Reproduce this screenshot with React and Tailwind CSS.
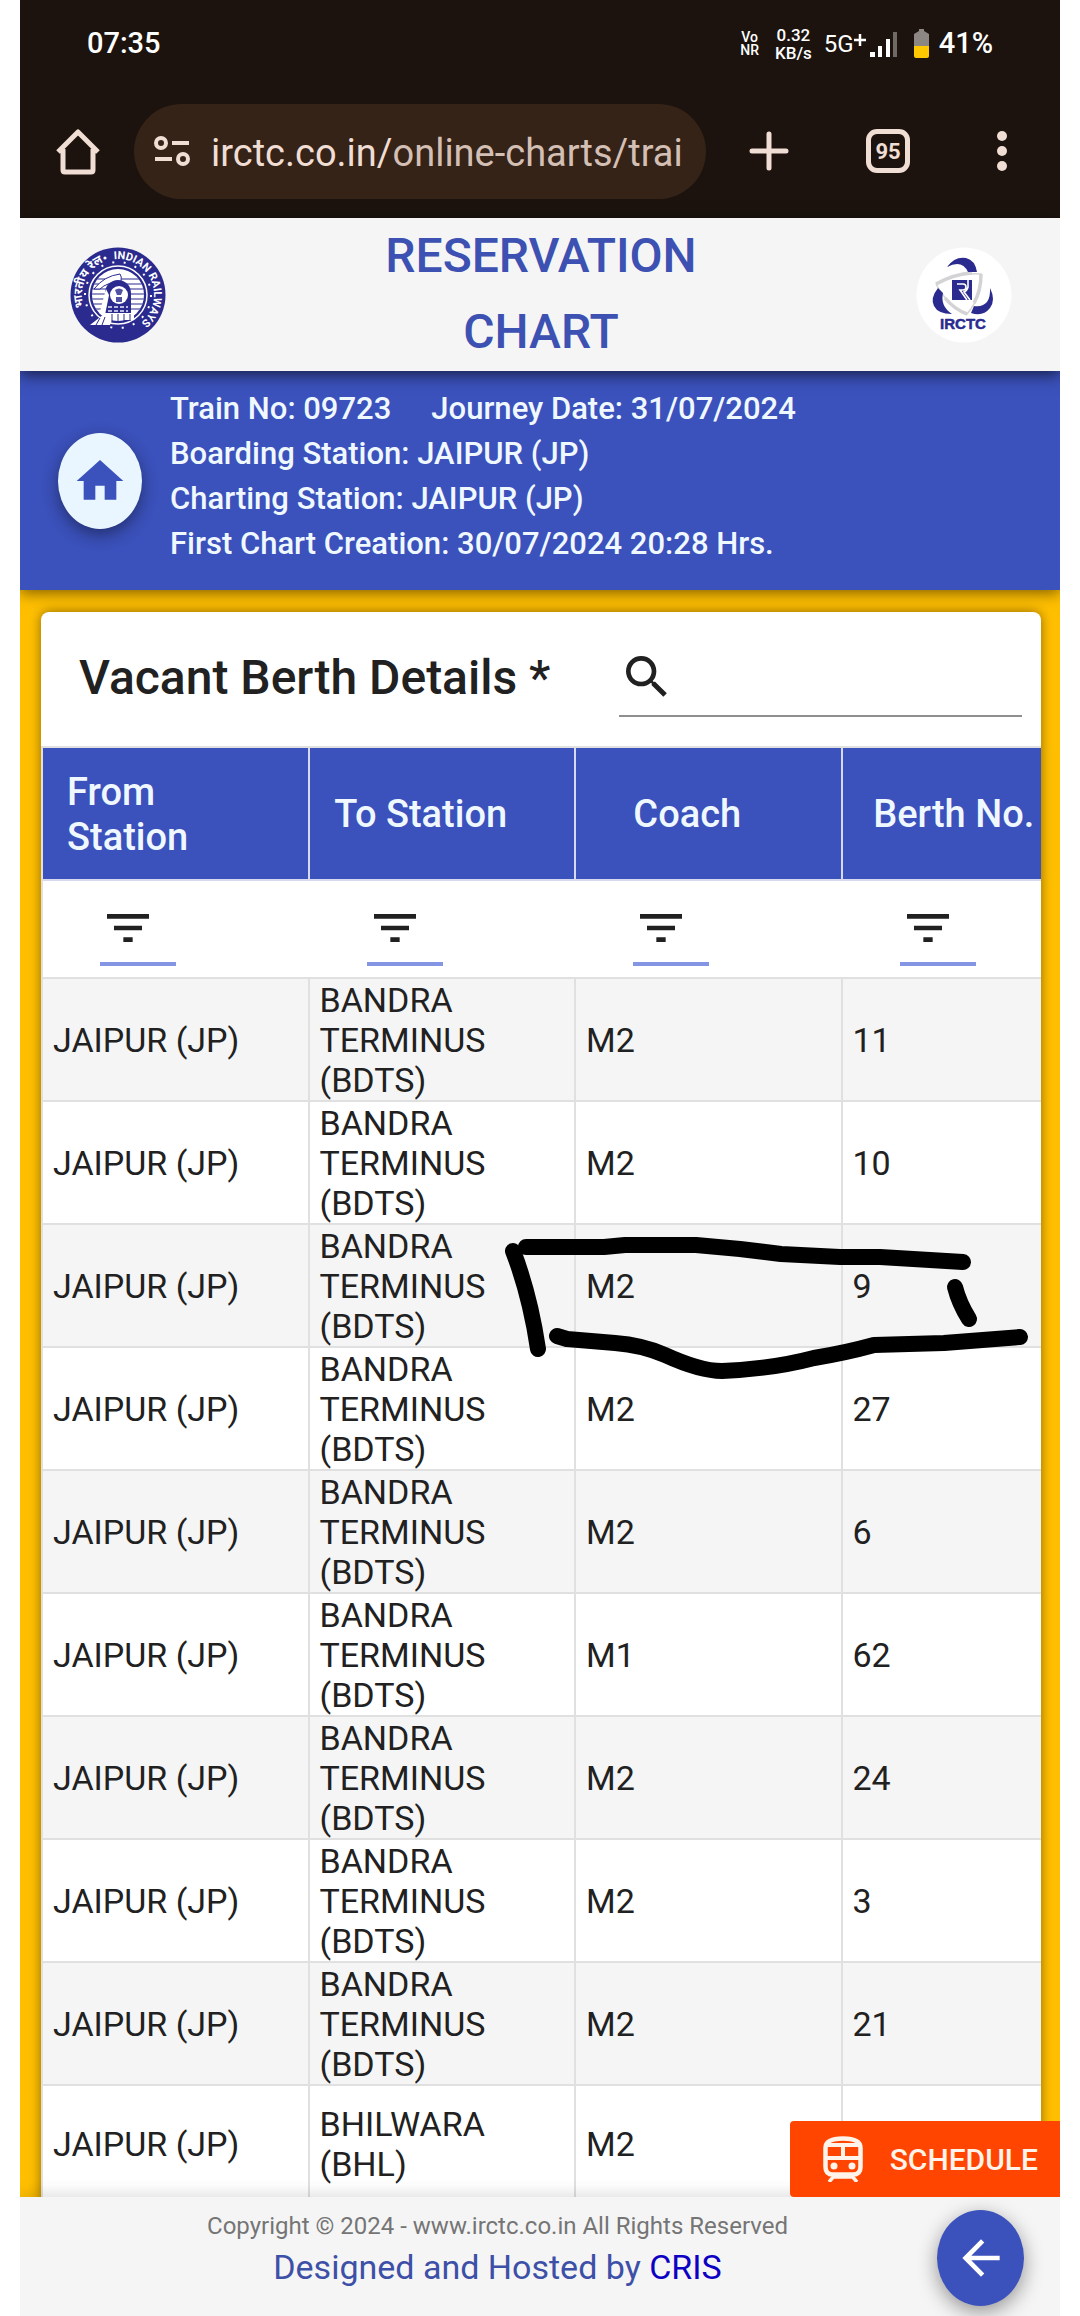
import { MdArrowBack, MdFilterList, MdHome, MdSearch } from "react-icons/md";

const columns = ["From Station", "To Station", "Coach", "Berth No."];

const berths = [
    { from: "JAIPUR (JP)", to: "BANDRA TERMINUS (BDTS)", coach: "M2", berth: 11 },
    { from: "JAIPUR (JP)", to: "BANDRA TERMINUS (BDTS)", coach: "M2", berth: 10 },
    { from: "JAIPUR (JP)", to: "BANDRA TERMINUS (BDTS)", coach: "M2", berth: 9 },
    { from: "JAIPUR (JP)", to: "BANDRA TERMINUS (BDTS)", coach: "M2", berth: 27 },
    { from: "JAIPUR (JP)", to: "BANDRA TERMINUS (BDTS)", coach: "M2", berth: 6 },
    { from: "JAIPUR (JP)", to: "BANDRA TERMINUS (BDTS)", coach: "M1", berth: 62 },
    { from: "JAIPUR (JP)", to: "BANDRA TERMINUS (BDTS)", coach: "M2", berth: 24 },
    { from: "JAIPUR (JP)", to: "BANDRA TERMINUS (BDTS)", coach: "M2", berth: 3 },
    { from: "JAIPUR (JP)", to: "BANDRA TERMINUS (BDTS)", coach: "M2", berth: 21 },
    { from: "JAIPUR (JP)", to: "BHILWARA (BHL)", coach: "M2", berth: "" },
];

// Phone status bar
const StatusBar = () => (
    <div className="flex h-[88px] items-center justify-between pl-[67px] pr-[67px] text-[29px] font-medium text-white">
        <span>07:35</span>
        <div className="flex items-center">
            <div className="mr-4 flex flex-col items-center text-[14px] leading-[13px]">
                <span>Vo</span>
                <span>NR</span>
            </div>
            <div className="mr-3 flex flex-col items-center text-[17px] leading-[18px]">
                <span>0.32</span>
                <span>KB/s</span>
            </div>
            <span className="text-[24px] font-normal">5G</span>
            <svg className="mr-1 mb-2 size-3" viewBox="0 0 12 12" stroke="#fff" strokeWidth="2.5">
                <path d="M0 6h12M6 0v12" />
            </svg>
            <svg className="mr-4 h-[26px] w-[28px]" viewBox="0 0 28 26" fill="#fff">
                <path d="M0 21h5v5H0zM8 15h4v11H8zM16 8h4v18h-4z" />
                <path d="M23 1h4v25h-4z" fill="#6f6a66" />
            </svg>
            <svg className="mr-[10px] h-[30px] w-[15px]" viewBox="0 0 15 30">
                <path d="M5 0h5v2l5 3v12H0V5l5-3z" fill="#8c8783" />
                <path d="M0 17h15v10q0 2-2 2H2q-2 0-2-2z" fill="#ffc800" />
            </svg>
            <span>41%</span>
        </div>
    </div>
);

// Browser toolbar with address and tabs
const BrowserBar = () => (
    <div className="flex h-[130px] items-center pr-[46px] pb-1 pl-[34px] text-[#f0ddd3]">
        <button type="button" aria-label="Home">
            <svg className="size-12" viewBox="0 0 48 48" fill="none" stroke="currentColor" strokeWidth="5">
                <path d="M4 25L24 5l20 20M9 22v21q0 2 2 2h26q2 0 2-2V22" strokeLinejoin="round" />
            </svg>
        </button>
        <div className="ml-8 flex h-[95px] min-w-0 flex-1 items-center rounded-full bg-[#352318] pr-4 pl-[19px]">
            <svg className="mr-5 h-8 w-[38px] shrink-0" viewBox="0 0 38 32" fill="none" stroke="currentColor" strokeWidth="4">
                <circle cx="8" cy="8" r="5" />
                <path d="M19 8h17M2 24h17" />
                <circle cx="30" cy="24" r="5" />
            </svg>
            <span className="flex-1 overflow-hidden pt-1 text-[38px] whitespace-nowrap">
                irctc.co.in/<span className="text-[#d3bfb4]">online-charts/trai</span>
            </span>
        </div>
        <button type="button" aria-label="New tab" className="ml-[42px]">
            <svg className="size-[42px]" viewBox="0 0 42 42" stroke="currentColor" strokeWidth="5" strokeLinecap="round">
                <path d="M21 4v34M4 21h34" />
            </svg>
        </button>
        <button type="button" aria-label="Tabs" className="ml-[76px] flex size-11 items-center justify-center rounded-[11px] border-5 border-current text-[22px] font-bold">
            95
        </button>
        <button type="button" aria-label="More" className="ml-[80px]">
            <svg className="h-[42px] w-6" viewBox="0 0 24 42" fill="currentColor">
                <circle cx="12" cy="6" r="5" />
                <circle cx="12" cy="21" r="5" />
                <circle cx="12" cy="36" r="5" />
            </svg>
        </button>
    </div>
);

const RailwayLogo = () => (
    <svg className="size-24" viewBox="0 0 96 96" role="img" aria-label="Indian Railways">
        <defs>
            <path id="ring" d="M48 84a36 36 0 1 1 0-72a36 36 0 1 1 0 72" />
            <clipPath id="disc">
                <circle cx="48" cy="48" r="26" />
            </clipPath>
        </defs>
        <circle cx="48" cy="48" r="47.500" fill="#2a2a8f" />
        <text fontSize="11" fontWeight="700" fill="#fff" fontFamily="Roboto, sans-serif">
            <textPath href="#ring" startOffset="109">INDIAN RAILWAYS</textPath>
        </text>
        <text fontSize="12" fontWeight="700" fill="#fff" fontFamily="Noto Sans, Noto Sans Devanagari, sans-serif">
            <textPath href="#ring" startOffset="44">भारतीय रेल</textPath>
        </text>
        <circle cx="35" cy="11" r="1.600" fill="#fff" />
        <circle cx="48" cy="48" r="33" fill="none" stroke="#fff" strokeWidth="2" strokeDasharray="2 9.500" />
        <circle cx="48" cy="48" r="29" fill="#2a2a8f" stroke="#fff" strokeWidth="1.500" />
        <circle cx="48" cy="48" r="26" fill="#fff" />
        <g clipPath="url(#disc)">
            <path d="M20 32h56M20 37h56M20 42h56M20 47h56M20 52h56M20 57h56M20 62h56" stroke="#2a2a8f" strokeWidth="1.200" />
            <path d="M24 42q10-13 26-15q2 2 1 8q-14 0-21 7z" fill="#fff" stroke="#2a2a8f" strokeWidth="1" />
            <path d="M35 66V46a13 13 0 0 1 26 0v20z" fill="#2a2a8f" />
            <path d="M36 42l-7 26h6l4-20z" fill="#fff" />
        </g>
        <circle cx="49" cy="48" r="9" fill="#fff" />
        <path d="M45 43q4-3 8 0l-2 5h-4zM46 50h6v5h-6z" fill="#5252a5" />
        <path d="M38 60h20M38 64h20" stroke="#b9b9e0" strokeWidth="2" strokeDasharray="4 2" />
        <path d="M34 67L20 78h20l2-5h22v-5z" fill="#fff" />
        <path d="M30 71l-4 7M35 70l-3 8M42 67v7M48 67v7M54 67v7M60 67v7" stroke="#2a2a8f" strokeWidth="1" />
    </svg>
);

const IrctcLogo = () => (
    <svg className="size-24" viewBox="0 0 96 96" role="img" aria-label="IRCTC">
        <circle cx="48" cy="48" r="47.500" fill="#fff" />
        <path d="M20 37Q41 25 65 27Q65 51 51 67Q31 58 20 37" fill="none" stroke="#d3d3d5" strokeWidth="1.500" />
        <path d="M20 37Q38 27 56 26M65 27Q65 44 58 56M51 67Q38 62 29 51" fill="none" stroke="#d3d3d5" strokeWidth="3.500" />
        <path d="M31 20Q39 9 50 11Q59 13 61 25L52 25Q46 12 31 20z" fill="#2a2a8f" />
        <path d="M22 41Q14 51 18 59Q22 67 36 67Q24 59 27 46z" fill="#2a2a8f" />
        <path d="M74 41Q80 53 74 61Q67 70 55 66L58 59Q75 61 74 41z" fill="#2a2a8f" />
        <path d="M36 33h20v20H36z" fill="#2a2a8f" />
        <path d="M41 37h6q3 0 3 3t-3 3h-3l7 10M52 33v7q-1 4-4 5l6 8" fill="none" stroke="#fff" strokeWidth="1.600" />
        <text x="47" y="82" textAnchor="middle" fontSize="15" fontWeight="700" fill="#2a2a8f" stroke="#2a2a8f" strokeWidth="0.500" fontFamily="Liberation Sans, Arial, sans-serif">
            IRCTC
        </text>
    </svg>
);

const TrainIcon = () => (
    <svg className="h-[46px] w-10 shrink-0" viewBox="0 0 40 46" fill="none" stroke="currentColor">
        <path d="M2.500 12Q2.500 2.500 20 2.500T37.500 12V31Q37.500 38.500 30 38.500H10Q2.500 38.500 2.500 31z" strokeWidth="4.500" />
        <path d="M3 9h34M20 10v12M3 22h34" strokeWidth="4" />
        <circle cx="11" cy="30" r="3.500" fill="currentColor" stroke="none" />
        <circle cx="29" cy="30" r="3.500" fill="currentColor" stroke="none" />
        <path d="M12 39l-6 7M28 39l6 7M9 41h22" strokeWidth="3.500" />
    </svg>
);

const PageHeader = () => (
    <header className="relative z-20 flex h-[153px] items-center justify-between bg-[#f5f5f5] pr-[48px] pl-[50px] shadow-[0_4px_14px_rgba(0,0,0,0.6)]">
        <RailwayLogo />
        <h1 className="w-[320px] pb-[2px] text-center text-[48px] leading-[76px] font-medium text-[#3d51b2]">RESERVATION CHART</h1>
        <IrctcLogo />
    </header>
);

const TrainInfo = () => (
    <section className="relative z-10 flex h-[219px] items-center bg-[#3b51bb] pl-[38px] text-[31px] leading-[45px] font-medium text-[#f0f8ff] shadow-[0_3px_14px_rgba(0,0,0,0.5)]">
        <button type="button" aria-label="Home" className="flex h-24 w-[84px] items-center justify-center rounded-[50%] bg-[#e9f6ff] text-[#3b51bb] shadow-[0_6px_16px_rgba(0,0,0,0.4)]">
            <MdHome className="size-14" />
        </button>
        <div className="ml-7 pb-[10px]">
            <p>
                <span className="mr-10">Train No: 09723</span>
                <span>Journey Date: 31/07/2024</span>
            </p>
            <p>Boarding Station: JAIPUR (JP)</p>
            <p>Charting Station: JAIPUR (JP)</p>
            <p>First Chart Creation: 30/07/2024 20:28 Hrs.</p>
        </div>
    </section>
);

// Hand drawn marker around berth 9
const Marker = () => (
    <svg className="pointer-events-none absolute top-[489px] left-[464px] h-[150px] w-[525px]" viewBox="505 1235 525 150" fill="none" stroke="#000" strokeWidth="16" strokeLinecap="round" strokeLinejoin="round">
        <path d="M526 1247L604 1247L625 1245L696 1245L740 1249L781 1254L840 1257L880 1257L963 1262" />
        <path d="M513 1251Q530 1295 538 1349" />
        <path d="M955 1287Q959 1303 969 1319" />
        <path d="M557 1336L567 1339L615 1343Q642 1345 665 1355Q700 1371 722 1371Q772 1369 814 1358Q845 1353 874 1345L944 1343L1020 1337" />
    </svg>
);

const BerthTable = () => (
    <div className="relative overflow-hidden">
        <table className="w-[1068px] table-fixed border-separate border-spacing-0 border-t-2 border-l-2 border-[#e0e0e0] text-[#212121]">
            <thead>
                <tr>
                    {columns.map((name) => (
                        <th key={name} scope="col" className="h-[133px] border-r-2 border-b-2 border-[#d5daf0] bg-[#3b51bb] pt-[2px] pr-[66px] pl-6 text-[38px] leading-[45px] font-medium text-[#f0f8ff]">
                            <button type="button" className="mx-auto block text-left">{name}</button>
                        </th>
                    ))}
                </tr>
                <tr>
                    {columns.map((name) => (
                        <td key={name} className="h-[98px] border-b-2 border-[#e0e0e0] pl-[57px]">
                            <button type="button" aria-label={"Filter " + name} className="flex h-[74px] w-[76px] border-b-4 border-[#8496e3]">
                                <MdFilterList className="mt-2 size-14" />
                            </button>
                        </td>
                    ))}
                </tr>
            </thead>
            <tbody className="text-[34px] leading-[40px]">
                {berths.map((row, i) => (
                    <tr key={i} className="odd:bg-[#f5f5f5] *:h-[123px] *:border-r-2 *:border-b-2 *:border-[#e0e0e0] *:pl-[10px] last:*:h-[117px]">
                        <td>{row.from}</td>
                        <td className="pr-16">{row.to}</td>
                        <td>{row.coach}</td>
                        <td>{row.berth}</td>
                    </tr>
                ))}
            </tbody>
        </table>
        <Marker />
    </div>
);

const App = () => (
    <div className="h-screen bg-white px-5 font-[Roboto,sans-serif]">
        <div className="flex h-full flex-col overflow-hidden">
            <div className="bg-[#1c130e]">
                <StatusBar />
                <BrowserBar />
            </div>
            <PageHeader />
            <TrainInfo />

            <main className="min-h-0 flex-1 overflow-hidden bg-[#ffbf00] pt-[22px] pr-[19px] pl-[21px]">
                <div className="overflow-hidden rounded-t-lg bg-white shadow-[0_0_12px_rgba(0,0,0,0.45)]">
                    <div className="flex h-[134px] items-center justify-between pr-[19px] pb-[2px] pl-[38px]">
                        <h2 className="text-[48px] font-medium text-[#212121]">Vacant Berth Details *</h2>
                        <label className="flex h-[78px] w-[403px] items-center border-b-2 border-[#8f8f8f] text-[#212121]">
                            <MdSearch className="size-14 shrink-0" />
                            <input type="text" aria-label="Search" className="min-w-0 flex-1 text-[34px] outline-none" />
                        </label>
                    </div>
                    <BerthTable />
                </div>
            </main>

            <footer className="relative flex h-[119px] shrink-0 flex-col items-center bg-[#f5f5f5] pt-3 pr-[85px] shadow-[0_-4px_14px_rgba(0,0,0,0.12)]">
                <p className="text-[24px] leading-[34px] text-[#757575]">Copyright © 2024 - www.irctc.co.in All Rights Reserved</p>
                <p className="text-[34px] leading-[48px] text-[#3d50a8]">
                    Designed and Hosted by <a href="#cris" className="text-[#0d00c4]">CRIS</a>
                </p>
                <button type="button" className="absolute right-0 bottom-full flex h-[76px] w-[270px] items-center justify-between rounded-l bg-[#ff4500] pr-[22px] pl-[33px] text-[30px] font-medium text-[#fff3ea]">
                    <TrainIcon />
                    SCHEDULE
                </button>
                <button type="button" aria-label="Back" className="absolute top-[13px] right-9 flex h-24 w-[87px] items-center justify-center rounded-[50%] bg-[#3b51bb] text-white shadow-[0_6px_20px_rgba(0,0,0,0.4)]">
                    <MdArrowBack className="size-14" />
                </button>
            </footer>
        </div>
    </div>
);

export default App
